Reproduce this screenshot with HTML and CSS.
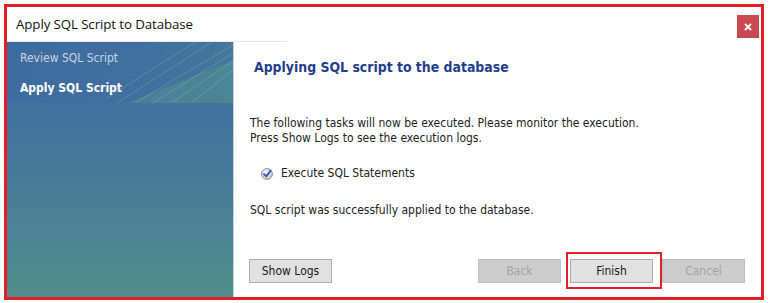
FILE: index.html
```html
<!DOCTYPE html>
<html>
<head>
<meta charset="utf-8">
<link rel="stylesheet" href="styles.css">
</head>
<body>
<div class="frame">
  <div class="titlebar">
    <span class="title">Apply SQL Script to Database</span>
    <button class="close" aria-label="Close">
      <svg width="8" height="8" viewBox="0 0 8 8"><path d="M1 1L7 7M7 1L1 7" stroke="#fff" stroke-width="1.8"/></svg>
    </button>
  </div>
  <div class="sep"></div>
  <div class="dialog">
    <aside class="sidebar">
      <div class="band">
        <svg class="band-art" width="226" height="61" viewBox="0 0 226 61">
          <path d="M120 61L226 18L226 61Z" fill="rgba(90,160,135,0.35)"/>
          <path d="M205 0L110 61M226 3L128 61M226 11L146 61M226 19L164 61M226 28L184 61M188 0L100 56" stroke="rgba(150,200,195,0.22)" stroke-width="1.2" fill="none"/>
        </svg>
        <div class="step">Review SQL Script</div>
        <div class="step active">Apply SQL Script</div>
      </div>
    </aside>
    <main class="content">
      <h1 class="heading">Applying SQL script to the database</h1>
      <p class="intro">The following tasks will now be executed. Please monitor the execution.<br>Press Show Logs to see the execution logs.</p>
      <div class="task">
        <svg class="check" width="12" height="12" viewBox="0 0 12 12">
          <defs><radialGradient id="g" cx="0.4" cy="0.35" r="0.7"><stop offset="0" stop-color="#fdfdfd"/><stop offset="1" stop-color="#c4c4c4"/></radialGradient></defs>
          <circle cx="6" cy="6" r="5.4" fill="url(#g)" stroke="#8a8a8a" stroke-width="1"/>
          <path d="M3 6.2L5.2 8.4L9.6 2.6" stroke="#2a5bc4" stroke-width="1.9" fill="none" stroke-linecap="round" stroke-linejoin="round"/>
        </svg>
        <span>Execute SQL Statements</span>
      </div>
      <p class="result">SQL script was successfully applied to the database.</p>
      <div class="buttons">
        <button class="btn">Show Logs</button>
        <div class="spacer"></div>
        <button class="btn disabled">Back</button>
        <div class="highlight-wrap">
          <button class="btn">Finish</button>
          <span class="highlight"></span>
        </div>
        <button class="btn disabled">Cancel</button>
      </div>
    </main>
  </div>
</div>
</body>
</html>
```
FILE: styles.css
```css
html, body {
  margin: 0;
  padding: 0;
  background: #ffffff;
}
body {
  font-family: "DejaVu Sans Condensed", "DejaVu Sans", sans-serif;
  font-size: 12px;
  color: #222;
}
.frame {
  margin: 4px 0 0 4px;
  width: 760px;
  height: 296px;
  box-sizing: border-box;
  border: 3px solid #e31e26;
  background: #fff;
  display: flex;
  flex-direction: column;
}
.titlebar {
  height: 34px;
  display: flex;
  align-items: center;
  padding-left: 9px;
  padding-right: 2px;
}
.title {
  flex: 1;
  font-family: "Open Sans", "Liberation Sans", sans-serif;
  font-size: 13.3px;
  color: #111;
  letter-spacing: -0.1px;
}
.close {
  align-self: flex-start;
  margin-top: 8px;
  width: 22px;
  height: 23px;
  border: none;
  padding: 0;
  background: #c84a4e;
  display: flex;
  align-items: center;
  justify-content: center;
}
.sep {
  width: 280px;
  height: 1px;
  background: #e3e8ee;
}
.dialog {
  flex: 1;
  display: flex;
  min-height: 0;
}
.sidebar {
  width: 226px;
  border-right: 1px solid #c9d6e2;
  background: linear-gradient(180deg, #43719f 0%, #43729f 24%, #48799a 50%, #4d8590 80%, #528c8a 100%);
}
.band {
  position: relative;
  height: 61px;
  background: linear-gradient(90deg, #3f6c9f 0%, #416f9f 60%, #44789b 100%);
  padding-top: 9px;
  box-sizing: border-box;
}
.band-art {
  position: absolute;
  left: 0;
  top: 0;
}
.step {
  position: relative;
  padding-left: 13px;
  height: 30px;
  line-height: 15px;
  color: #c9d5e3;
}
.step.active {
  color: #ffffff;
  font-weight: bold;
}
.content {
  flex: 1;
  display: flex;
  flex-direction: column;
  padding: 17px 16px 14px 15px;
}
.heading {
  margin: 0 0 0 5px;
  font-size: 13.9px;
  line-height: 17px;
  font-weight: bold;
  color: #1f3e8c;
}
.intro {
  margin: 40px 0 0 1px;
  line-height: 15px;
}
.task {
  margin: 20px 0 0 12px;
  display: flex;
  align-items: center;
  gap: 8px;
  line-height: 15px;
}
.result {
  margin: 22px 0 0 1px;
  line-height: 15px;
}
.buttons {
  margin-top: auto;
  display: flex;
  align-items: flex-end;
  gap: 9px;
}
.spacer {
  flex: 1;
}
.btn {
  width: 83px;
  height: 24px;
  box-sizing: border-box;
  border: 1px solid #adadad;
  background: #e1e1e1;
  font-family: "DejaVu Sans Condensed", "DejaVu Sans", sans-serif;
  font-size: 12px;
  color: #1a1a1a;
  padding: 0;
}
.btn.disabled {
  background: #cccccc;
  border-color: #bfbfbf;
  color: #a3a3a3;
}
.highlight-wrap {
  position: relative;
  display: flex;
}
.highlight {
  position: absolute;
  left: -4px;
  top: -7px;
  width: 96px;
  height: 37px;
  box-sizing: border-box;
  border: 2px solid #e3202a;
}
```
